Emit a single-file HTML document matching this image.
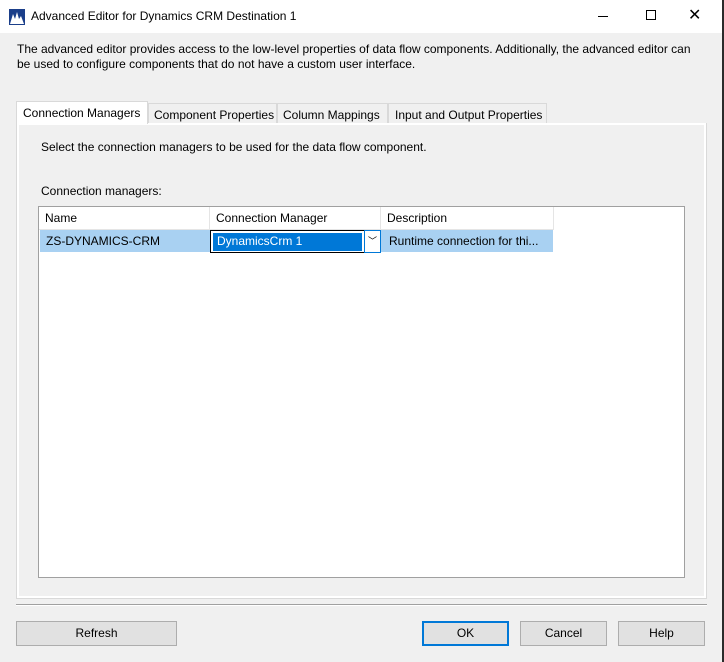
<!DOCTYPE html><html><head><style>
*{box-sizing:border-box;margin:0;padding:0}
body{width:724px;height:662px;background:#f0f0f0;font-family:"Liberation Sans",sans-serif;font-size:12px;color:#000;position:relative;overflow:hidden}
.a{position:absolute}
.title{left:0;top:0;width:722px;height:33px;background:#fff}
.tab{top:103px;height:21px;border:1px solid #d9d9d9;border-bottom:none;background:#f0f0f0;padding:4px 0 0 5px;white-space:nowrap}
.btn{top:621px;height:25px;background:#e1e1e1;border:1px solid #adadad;text-align:center;line-height:23px}
.cell{top:0;height:23px;line-height:22px;padding-left:6px;white-space:nowrap}
</style></head><body>
<div class="a title"></div>
<div class="a" style="left:722px;top:0;width:2px;height:662px;background:#2b2b2b"></div>
<svg class="a" style="left:9px;top:9px" width="16" height="16"><rect width="16" height="16" fill="#1b3f8a"/><path d="M1 15 L4 5 L6 10 L8 3 L10 10 L12 7 L15 15Z" fill="#fff"/></svg>
<div class="a" style="left:31px;top:9px">Advanced Editor for Dynamics CRM Destination 1</div>
<div class="a" style="left:598px;top:16px;width:10px;height:1px;background:#000"></div>
<div class="a" style="left:646px;top:10px;width:10px;height:10px;border:1px solid #000"></div>
<div class="a" style="left:688px;top:5px;font-size:16px">✕</div>
<div class="a" style="left:17px;top:42px;line-height:15px;width:690px">The advanced editor provides access to the low-level properties of data flow components. Additionally, the advanced editor can be used to configure components that do not have a custom user interface.</div>
<div class="a" style="left:16px;top:123px;width:691px;height:476px;border:1px solid #d9d9d9;background:#f0f0f0"></div>
<div class="a tab" style="left:16px;top:101px;height:23px;width:132px;background:#fff;padding-top:4px;padding-left:6px;z-index:2">Connection Managers</div>
<div class="a tab" style="left:148px;width:129px">Component Properties</div>
<div class="a tab" style="left:277px;width:111px">Column Mappings</div>
<div class="a tab" style="left:388px;width:159px;padding-left:6px">Input and Output Properties</div>
<div class="a" style="left:17px;top:123px;width:689px;height:475px;background:#fff;border:none"></div>
<div class="a" style="left:19px;top:125px;width:685px;height:471px;background:#f0f0f0"></div>
<div class="a" style="left:41px;top:140px">Select the connection managers to be used for the data flow component.</div>
<div class="a" style="left:41px;top:184px">Connection managers:</div>
<div class="a" style="left:38px;top:206px;width:647px;height:372px;background:#fff;border:1px solid #a0a0a0">
<div class="a" style="left:0;top:0;width:515px;height:23px;background:#fff;border-bottom:1px solid #e5e5e5"></div>
<div class="a cell" style="left:0;width:171px;border-right:1px solid #e5e5e5">Name</div>
<div class="a cell" style="left:171px;width:171px;border-right:1px solid #e5e5e5">Connection Manager</div>
<div class="a cell" style="left:342px;width:173px;border-right:1px solid #e5e5e5">Description</div>
<div class="a" style="left:1px;top:23px;width:513px;height:22px;background:#a9d1f2"></div>
<div class="a" style="left:7px;top:27px">ZS-DYNAMICS-CRM</div>
<div class="a" style="left:171px;top:23px;width:171px;height:23px;background:#fff;border:1px solid #000;border-right:1px solid #0078d7"></div>
<div class="a" style="left:174px;top:26px;width:149px;height:18px;background:#0078d7;color:#fff;padding:1px 0 0 4px">DynamicsCrm 1</div>
<div class="a" style="left:325px;top:23px;width:17px;height:23px;border:1px solid #0078d7;background:#fff;text-align:center;font-size:9px;line-height:20px">﹀</div>
<div class="a" style="left:350px;top:27px">Runtime connection for thi...</div>
</div>
<div class="a" style="left:16px;top:604px;width:691px;height:2px;border-top:1px solid #a0a0a0;border-bottom:1px solid #fff"></div>
<div class="a btn" style="left:16px;width:161px">Refresh</div>
<div class="a btn" style="left:422px;width:87px;border:2px solid #0078d7;line-height:21px">OK</div>
<div class="a btn" style="left:520px;width:87px">Cancel</div>
<div class="a btn" style="left:618px;width:87px">Help</div>
</body></html>
